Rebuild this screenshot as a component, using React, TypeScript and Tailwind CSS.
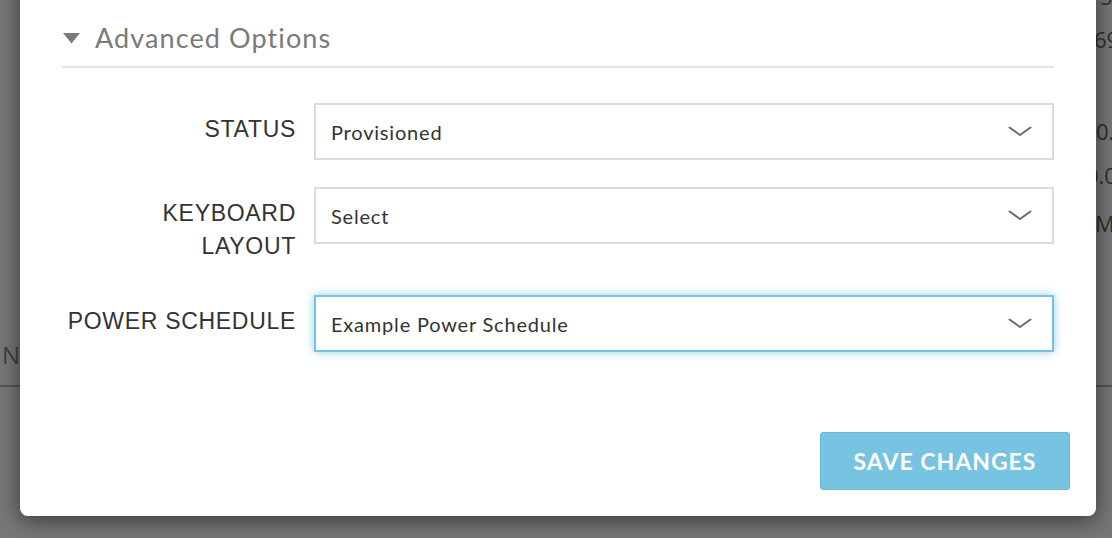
import React from "react";

const ui = { fontFamily: "Lato, 'Open Sans', sans-serif" };
const label = { fontFamily: "'Liberation Sans', Arial, sans-serif" };

function Chevron() {
  return (
    <svg width="24" height="11" viewBox="0 0 24 11" fill="none">
      <path d="M1.5 1.5 L12 9 L22.5 1.5" stroke="#6a6a6a" strokeWidth="2" strokeLinecap="round" strokeLinejoin="round" />
    </svg>
  );
}

function SelectBox({ value, focused }: { value: string; focused?: boolean }) {
  return (
    <div
      className={
        "flex h-[57px] w-[740px] items-center justify-between border-2 bg-white pl-[15px] pr-[20px] " +
        (focused
          ? "border-[#76c2e0] shadow-[0_0_9px_rgba(110,195,230,0.75)]"
          : "border-[#dcdcdc]")
      }
    >
      <span className="text-[20px] tracking-[0.8px] text-[#333]" style={ui}>
        {value}
      </span>
      <Chevron />
    </div>
  );
}

function Row({ name, children, lines = 1 }: { name: React.ReactNode; children: React.ReactNode; lines?: number }) {
  return (
    <div className="flex items-start gap-[18px]">
      <div
        className="w-[234px] pt-[10px] text-right text-[23px] leading-[33px] tracking-[0.7px] text-[#333]"
        style={{ ...label, minHeight: lines > 1 ? 76 : undefined }}
      >
        {name}
      </div>
      {children}
    </div>
  );
}

export default function App() {
  return (
    <div className="relative h-[538px] w-[1112px] overflow-hidden bg-[#777777]">
      {/* page underneath the overlay */}
      <div
        className="absolute left-[1092px] top-0 flex w-[20px] flex-col text-[22px] leading-none text-[#2e2e2e]"
        style={{ fontFamily: "'Open Sans', sans-serif" }}
      >
        <div className="mt-[-15px] ml-[8px]">5</div>
        <div className="mt-[21px] ml-[2px]">69</div>
        <div className="mt-[70px] ml-[4px]">0.</div>
        <div className="mt-[22px] ml-[-6px]">0.0</div>
        <div className="mt-[26px] ml-[3px]">M4</div>
      </div>
      <div className="absolute left-[2px] top-[343px] text-[24px] leading-none text-[#404040]" style={{ fontFamily: "'Open Sans', sans-serif" }}>
        N
      </div>
      <div className="absolute left-0 right-0 top-[385px] h-[2px] bg-[#555]" />

      {/* modal dialog */}
      <div className="absolute left-[20px] top-[-40px] flex h-[556px] w-[1076px] flex-col rounded-[8px] bg-white shadow-[0_4px_22px_rgba(0,0,0,0.55)]">
        <div className="px-[42px] pt-[60px]">
          <div className="flex items-center border-b-2 border-[#e4e4e4] pb-[10px]">
            <svg width="17" height="11" viewBox="0 0 17 11" className="ml-[1px] mr-[15px]">
              <path d="M0 0 H17 L8.5 10.5 Z" fill="#7a7a7a" />
            </svg>
            <span className="text-[27px] leading-[36px] tracking-[1.1px] text-[#7a7a7a]" style={ui}>
              Advanced Options
            </span>
          </div>

          <div className="mt-[35px] flex flex-col">
            <Row name="STATUS">
              <SelectBox value="Provisioned" />
            </Row>
            <div className="mt-[27px]">
              <Row name={<>KEYBOARD<br />LAYOUT</>} lines={2}>
                <SelectBox value="Select" />
              </Row>
            </div>
            <div className="mt-[32px]">
              <Row name="POWER SCHEDULE">
                <SelectBox value="Example Power Schedule" focused />
              </Row>
            </div>
          </div>
        </div>

        <div className="mt-auto flex justify-end px-[26px] pb-[26px]">
          <button
            className="h-[58px] w-[250px] rounded-[3px] border border-[#68b9d8] bg-[#76c4e1] text-[23px] font-bold tracking-[1px] text-white"
            style={ui}
          >
            SAVE CHANGES
          </button>
        </div>
      </div>
    </div>
  );
}
